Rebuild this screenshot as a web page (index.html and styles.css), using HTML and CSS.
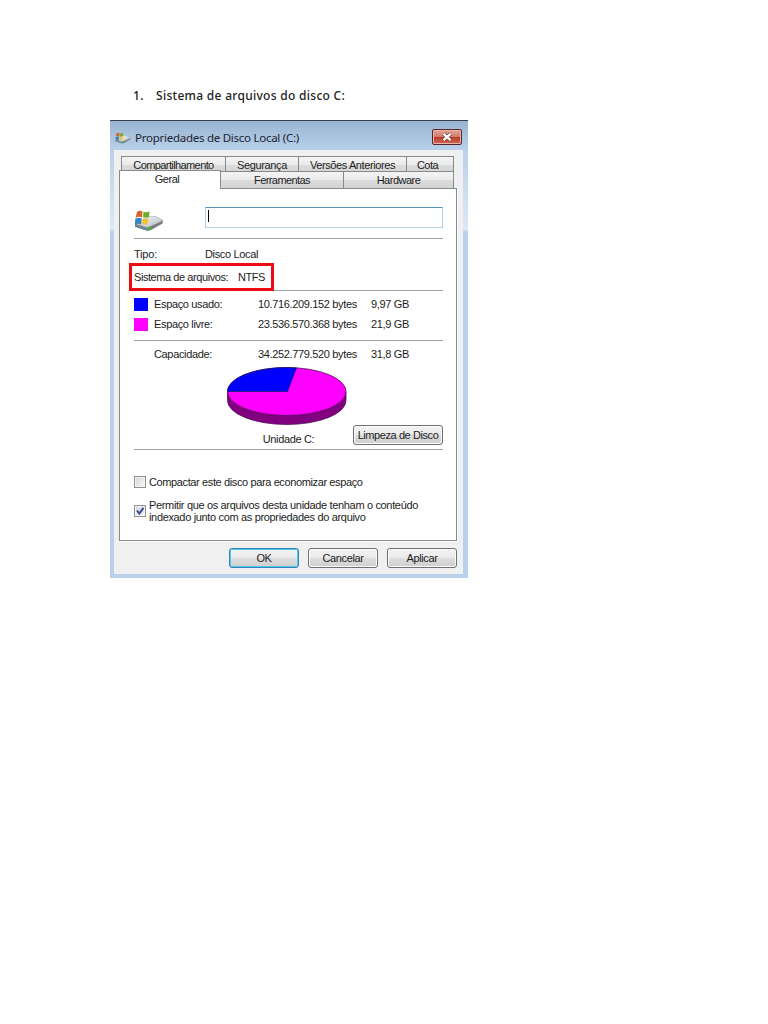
FILE: index.html
```html
<!DOCTYPE html>
<html lang="pt-BR">
<head>
<meta charset="utf-8">
<title>Propriedades de Disco Local</title>
<link rel="stylesheet" href="styles.css">
</head>
<body>
<svg width="0" height="0" class="defs">
  <defs>
    <linearGradient id="metal" x1="0" y1="0" x2="1" y2="1"><stop offset="0" stop-color="#fafafa"/><stop offset="1" stop-color="#b4b7b9"/></linearGradient>
    <symbol id="drive" viewBox="0 0 30 22">
      <path d="M1 14 L13 18 L14 21.5 L12 21 L1 17.5Z" fill="#6d8793"/>
      <path d="M13 18 L29 11 L28.5 14 L17 20.5 L13.5 21.5Z" fill="#777d80"/>
      <path d="M1 13.5 L15 7 L22 7 L29 10.8 L14 18Z" fill="url(#metal)" stroke="#9a9fa3" stroke-width=".5"/>
      <path d="M13 18.2 L17 16.8 L17.5 19.5 L14 20.8Z" fill="#3fae45"/>
      <path d="M3 2.5 Q5.5 .5 8.5 2 L8 8 Q4.5 6.5 1.5 8.5Z" fill="#d9622e"/>
      <path d="M9.5 2.3 Q12 3.5 15.5 1.8 L15 7.2 Q12 9 9 7.8Z" fill="#6fae2c"/>
      <path d="M1.2 9.5 Q4.5 7.5 7.6 9 L7.2 15 Q4 13.5 1 15Z" fill="#3c83bd"/>
      <path d="M8.8 9 Q11.5 10.4 14.6 8.4 L13.6 14 Q11 16 8.2 14.6Z" fill="#f3c332"/>
    </symbol>
  </defs>
</svg>
<main class="page">
  <h1 class="heading"><span class="num">1.</span><span>Sistema de arquivos do disco C:</span></h1>
  <section class="dialog">
    <header class="titlebar">
      <svg class="title-icon"><use href="#drive"/></svg>
      <span class="title">Propriedades de Disco Local (C:)</span>
      <span class="close"><svg width="12" height="10" viewBox="0 0 12 10"><path d="M2.5 1.8 L9.5 8.2 M9.5 1.8 L2.5 8.2" stroke="#6d3c3c" stroke-width="3.8"/><path d="M2.5 1.8 L9.5 8.2 M9.5 1.8 L2.5 8.2" stroke="#fff" stroke-width="2.4"/></svg></span>
    </header>
    <div class="client">
      <div class="tabs back">
        <span class="tab t-comp">Compartilhamento</span><span class="tab t-seg">Segurança</span><span class="tab t-ver">Versões Anteriores</span><span class="tab t-cota">Cota</span>
      </div>
      <div class="tabs front">
        <span class="tab active">Geral</span><span class="tab t-fer">Ferramentas</span><span class="tab t-hard">Hardware</span>
      </div>
      <div class="panel">
        <div class="name-row">
          <svg class="drive-icon"><use href="#drive"/></svg>
          <span class="field"><i class="caret"></i></span>
        </div>
        <div class="info">
          <div class="tipo"><span>Tipo:</span><span class="w-disco">Disco Local</span></div>
          <div class="fs"><span class="w-fs">Sistema de arquivos:</span><span class="w-ntfs">NTFS</span></div>
        </div>
        <div class="space">
          <div class="line"><i class="swatch used"></i><span class="w-usado">Espaço usado:</span><span class="bytes">10.716.209.152 bytes</span><span class="gb">9,97 GB</span></div>
          <div class="line"><i class="swatch free"></i><span class="w-usado">Espaço livre:</span><span class="bytes">23.536.570.368 bytes</span><span class="gb">21,9 GB</span></div>
        </div>
        <div class="capacity">
          <div class="line"><i></i><span class="w-cap">Capacidade:</span><span class="bytes">34.252.779.520 bytes</span><span class="gb">31,8 GB</span></div>
          <div class="chart-row">
            <div class="chart">
              <svg width="120" height="59" viewBox="0 0 120 59">
                <path d="M.5 24.5 V33.5 A59.25 24 0 0 0 119 33.5 V24.5Z" fill="#800080" stroke="#55105c" stroke-width=".8"/>
                <ellipse cx="59.75" cy="24.5" rx="59.25" ry="24" fill="#f0f" stroke="#55105c" stroke-width=".8"/>
                <path d="M60.5 24.5 H.5 A59.25 24 0 0 1 69.5 .9Z" fill="#00f" stroke="#1c1c70" stroke-width=".8"/>
              </svg>
              <span class="w-unid">Unidade C:</span>
            </div>
            <span class="button cleanup">Limpeza de Disco</span>
          </div>
        </div>
        <div class="checks">
          <div class="check one"><i class="box"></i><span class="w-compact">Compactar este disco para economizar espaço</span></div>
          <div class="check two"><i class="box"><svg width="10" height="10" viewBox="0 0 10 10"><path d="M2 4.5 L4.3 7.5 L8.5 1.8" fill="none" stroke="#3a4a92" stroke-width="2"/></svg></i><span class="lines"><span>Permitir que os arquivos desta unidade tenham o conteúdo</span><br><span>indexado junto com as propriedades do arquivo</span></span></div>
        </div>
      </div>
      <footer class="actions"><span class="button ok">OK</span><span class="button">Cancelar</span><span class="button">Aplicar</span></footer>
    </div>
  </section>
</main>
</body>
</html>
```
FILE: styles.css
```css
* { box-sizing: border-box; }
body { margin: 0; background: #fff; }
.defs { display: block; }
.page { padding: 87px 0 0 110px; width: 768px; height: 1024px; font: 11px/14px "Liberation Sans", Arial, sans-serif; color: #1c1c1c; white-space: nowrap; letter-spacing: -.35px; }
.page i { display: block; }
.heading { display: flex; margin: 0 0 16px; padding-left: 23px; font: 500 12px/17px "Noto Sans", sans-serif; letter-spacing: .29px; color: #222; }
.num { width: 23px; }
.dialog { width: 358px; height: 458px; border-top: 1px solid #36414f; background: linear-gradient(#99b4d2, #b9d1ea 29px, #dce8f5 108px, #b9d1ea 111px); }
.titlebar { display: flex; align-items: center; height: 29px; padding: 5px 6px 0 5px; }
.title-icon { width: 16px; height: 12px; margin-right: 4px; }
.title { flex: 1; margin-top: -1px; font: 11.5px/16px "Noto Sans", sans-serif; letter-spacing: -.26px; color: #1c2430; }
.close { display: flex; align-items: center; justify-content: center; width: 30px; height: 16px; margin-top: -2px; border: 1px solid #57262a; border-radius: 2px; background: linear-gradient(#e3a59a, #d27a6b 48%, #b93726 50%, #cf6b57); box-shadow: inset 0 0 0 1px #e8b3aa; }
.client { height: 424px; margin: 0 5px 0 4px; padding: 6px 5px 0; background: #f0f0f0; }
.tabs { display: flex; }
.tab { height: 17px; border: 1px solid #868a8c; border-right-width: 0; border-bottom: 0; background: linear-gradient(#f4f4f4, #ebebeb 48%, #dcdcdc 52%, #d3d3d3); text-align: center; line-height: 16px; }
.tab:last-child { border-right-width: 1px; }
.back { margin-left: 2px; height: 16px; }
.t-comp { width: 104px; letter-spacing: -.6px; }
.t-seg { width: 73px; }
.t-ver { width: 108px; letter-spacing: -.4px; }
.t-cota { width: 48px; padding-right: 5px; letter-spacing: -.5px; }
.front { align-items: flex-end; height: 16px; position: relative; letter-spacing: -.5px; }
.active { width: 102px; height: 19px; margin-bottom: -1px; background: #fff; border-right-width: 1px; padding-right: 6px; z-index: 1; }
.t-fer { width: 122px; border-left: 0; letter-spacing: -.6px; }
.t-hard { width: 111px; }
.panel { width: 338px; height: 353px; border: 1px solid #868a8c; background: #fff; padding: 17px 13px 0 14px; box-shadow: 1px 1px #fff; }
.name-row { display: flex; height: 33px; border-bottom: 1px solid #a0a0a0; }
.drive-icon { width: 30px; height: 23px; margin-top: 3px; }
.field { width: 238px; height: 21px; margin-left: 41px; margin-top: 1px; padding: 2px 0 0 2px; border: 1px solid #b5cfe7; border-top-color: #5794bf; }
.caret { width: 1px; height: 12px; background: #000; }
.info { height: 52px; border-bottom: 1px solid #a0a0a0; padding-top: 8px; }
.tipo { display: flex; height: 16px; }
.tipo span:first-child { width: 71px; letter-spacing: -.2px; }
.fs { position: relative; width: 145px; height: 28px; margin-left: -5px; border: 3px solid #ef0b12; padding: 4px 0 0 2px; display: flex; }
.w-fs { width: 104px; letter-spacing: -.43px; }
.w-ntfs { letter-spacing: -.5px; }
.space { height: 50px; padding-top: 3px; border-bottom: 1px solid #a0a0a0; }
.line { display: grid; grid-template-columns: 20px 104px 113px auto; align-items: center; height: 20px; }
.swatch { width: 14px; height: 13px; }
.used { background: #00f; }
.free { background: #f0f; }
.capacity { height: 109px; padding-top: 3px; border-bottom: 1px solid #a0a0a0; }
.chart-row { display: flex; padding-top: 3px; }
.chart { width: 120px; margin-left: 93px; text-align: center; }
.chart svg { display: block; }
.chart span { display: block; margin-top: 6px; padding-left: 3px; }
.button { display: block; width: 70px; height: 20px; border: 1px solid #707070; border-radius: 3px; background: linear-gradient(#f2f2f2, #ebebeb 48%, #dddddd 50%, #cfcfcf); box-shadow: inset 0 0 0 1px #fcfcfc; text-align: center; line-height: 18px; }
.cleanup { width: 90px; margin: 58px 0 0 6px; letter-spacing: -.42px; }
.check { display: flex; align-items: center; letter-spacing: -.34px; }
.one { height: 14px; margin-top: 25px; letter-spacing: -.38px; }
.two { height: 24px; margin-top: 10px; line-height: 12px; }
.box { width: 12px; height: 12px; margin-right: 3px; border: 1px solid #8e8f8f; background: linear-gradient(135deg, #d2d6da, #f6f6f6); box-shadow: inset 0 0 0 1px #f4f4f4; }
.box svg { display: block; }
.actions { display: flex; justify-content: flex-end; gap: 9px; padding: 7px 1px 0 0; }
.ok { border: 1px solid #3c7fb1; box-shadow: inset 0 0 0 1px #48cdf0; }
```
